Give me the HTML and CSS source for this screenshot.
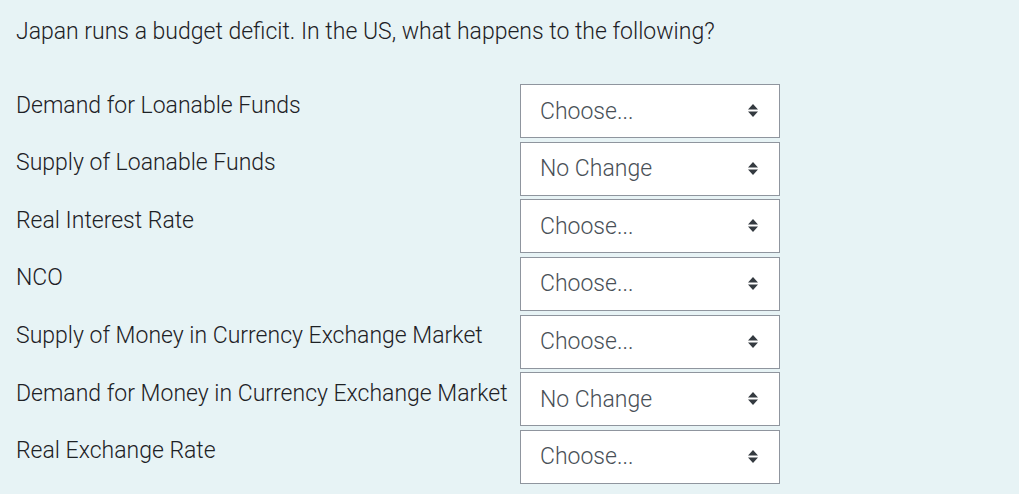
FILE: index.html
```html
<!DOCTYPE html>
<html>
<head>
<meta charset="utf-8">
<link rel="stylesheet" href="styles.css">
</head>
<body>
<div class="formulation">
  <p class="qtext">Japan runs a budget deficit. In the US, what happens to the following?</p>
  <div class="answers">
    <div class="label">Demand for Loanable Funds</div>
    <div class="sel"><select><option>Choose...</option></select><svg class="arrow" viewBox="0 0 10 13" width="10" height="13"><path d="M5 0 L10 5.5 H0 Z M0 7.5 H10 L5 13 Z"/></svg></div>
    <div class="label">Supply of Loanable Funds</div>
    <div class="sel"><select><option>No Change</option></select><svg class="arrow" viewBox="0 0 10 13" width="10" height="13"><path d="M5 0 L10 5.5 H0 Z M0 7.5 H10 L5 13 Z"/></svg></div>
    <div class="label">Real Interest Rate</div>
    <div class="sel"><select><option>Choose...</option></select><svg class="arrow" viewBox="0 0 10 13" width="10" height="13"><path d="M5 0 L10 5.5 H0 Z M0 7.5 H10 L5 13 Z"/></svg></div>
    <div class="label">NCO</div>
    <div class="sel"><select><option>Choose...</option></select><svg class="arrow" viewBox="0 0 10 13" width="10" height="13"><path d="M5 0 L10 5.5 H0 Z M0 7.5 H10 L5 13 Z"/></svg></div>
    <div class="label">Supply of Money in Currency Exchange Market</div>
    <div class="sel"><select><option>Choose...</option></select><svg class="arrow" viewBox="0 0 10 13" width="10" height="13"><path d="M5 0 L10 5.5 H0 Z M0 7.5 H10 L5 13 Z"/></svg></div>
    <div class="label">Demand for Money in Currency Exchange Market</div>
    <div class="sel"><select><option>No Change</option></select><svg class="arrow" viewBox="0 0 10 13" width="10" height="13"><path d="M5 0 L10 5.5 H0 Z M0 7.5 H10 L5 13 Z"/></svg></div>
    <div class="label">Real Exchange Rate</div>
    <div class="sel"><select><option>Choose...</option></select><svg class="arrow" viewBox="0 0 10 13" width="10" height="13"><path d="M5 0 L10 5.5 H0 Z M0 7.5 H10 L5 13 Z"/></svg></div>
  </div>
</div>
</body>
</html>
```
FILE: styles.css
```css
html, body {
  margin: 0;
  padding: 0;
  background: #e7f3f5;
}
body {
  font-family: Roboto, "Liberation Sans", sans-serif;
  font-size: 23px;
  font-weight: 300;
  color: #1d2125;
}
.formulation {
  padding: 17px 0 0 16px;
}
.qtext {
  margin: 0 0 37px 0;
  line-height: 30px;
}
.answers {
  display: grid;
  grid-template-columns: 504px 260px;
  row-gap: 3.67px;
}
.label {
  line-height: 30px;
  padding-top: 6.5px;
  white-space: nowrap;
}
.sel {
  position: relative;
  height: 54px;
}
.sel select {
  appearance: none;
  -webkit-appearance: none;
  width: 260px;
  height: 54px;
  margin: 0;
  border: 1px solid #8f959e;
  border-radius: 0;
  background: #fff;
  color: #495057;
  font-family: Roboto, "Liberation Sans", sans-serif;
  font-size: 23px;
  font-weight: 300;
  padding: 0 40px 0 19px;
  outline: none;
}
.arrow {
  position: absolute;
  left: 228px;
  top: 20px;
  fill: #343a40;
  pointer-events: none;
}
```
